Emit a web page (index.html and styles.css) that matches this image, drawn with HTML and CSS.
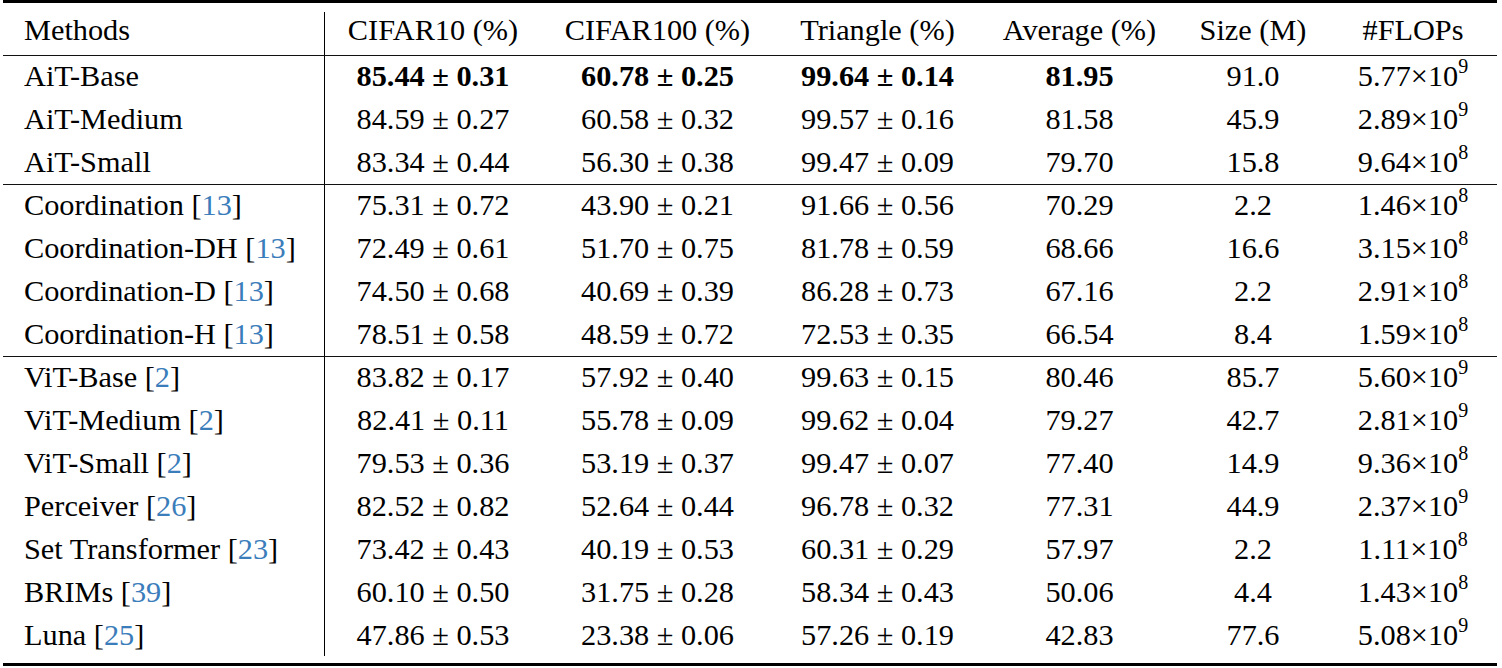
FILE: index.html
```html
<!DOCTYPE html>
<html lang="en">
<head>
<meta charset="utf-8">
<title>Results table</title>
<link rel="stylesheet" href="styles.css">
</head>
<body>
<table class="results">
  <colgroup>
    <col class="c-method">
    <col class="c-cifar10">
    <col class="c-cifar100">
    <col class="c-tri">
    <col class="c-avg">
    <col class="c-size">
    <col class="c-flops">
  </colgroup>
  <thead>
    <tr>
      <th class="method">Methods</th>
      <th>CIFAR10 (%)</th>
      <th>CIFAR100 (%)</th>
      <th>Triangle (%)</th>
      <th>Average (%)</th>
      <th>Size (M)</th>
      <th>#FLOPs</th>
    </tr>
  </thead>
  <tbody class="group first">
    <tr>
      <td class="method">AiT-Base</td>
      <td class="best">85.44 ± 0.31</td>
      <td class="best">60.78 ± 0.25</td>
      <td class="best">99.64 ± 0.14</td>
      <td class="best">81.95</td>
      <td>91.0</td>
      <td>5.77×10<sup class="exp">9</sup></td>
    </tr>
    <tr>
      <td class="method">AiT-Medium</td>
      <td>84.59 ± 0.27</td>
      <td>60.58 ± 0.32</td>
      <td>99.57 ± 0.16</td>
      <td>81.58</td>
      <td>45.9</td>
      <td>2.89×10<sup class="exp">9</sup></td>
    </tr>
    <tr class="tail">
      <td class="method">AiT-Small</td>
      <td>83.34 ± 0.44</td>
      <td>56.30 ± 0.38</td>
      <td>99.47 ± 0.09</td>
      <td>79.70</td>
      <td>15.8</td>
      <td>9.64×10<sup class="exp">8</sup></td>
    </tr>
  </tbody>
  <tbody class="group">
    <tr>
      <td class="method">Coordination [<span class="cite">13</span>]</td>
      <td>75.31 ± 0.72</td>
      <td>43.90 ± 0.21</td>
      <td>91.66 ± 0.56</td>
      <td>70.29</td>
      <td>2.2</td>
      <td>1.46×10<sup class="exp">8</sup></td>
    </tr>
    <tr>
      <td class="method">Coordination-DH [<span class="cite">13</span>]</td>
      <td>72.49 ± 0.61</td>
      <td>51.70 ± 0.75</td>
      <td>81.78 ± 0.59</td>
      <td>68.66</td>
      <td>16.6</td>
      <td>3.15×10<sup class="exp">8</sup></td>
    </tr>
    <tr>
      <td class="method">Coordination-D [<span class="cite">13</span>]</td>
      <td>74.50 ± 0.68</td>
      <td>40.69 ± 0.39</td>
      <td>86.28 ± 0.73</td>
      <td>67.16</td>
      <td>2.2</td>
      <td>2.91×10<sup class="exp">8</sup></td>
    </tr>
    <tr class="tail">
      <td class="method">Coordination-H [<span class="cite">13</span>]</td>
      <td>78.51 ± 0.58</td>
      <td>48.59 ± 0.72</td>
      <td>72.53 ± 0.35</td>
      <td>66.54</td>
      <td>8.4</td>
      <td>1.59×10<sup class="exp">8</sup></td>
    </tr>
  </tbody>
  <tbody class="group last">
    <tr>
      <td class="method">ViT-Base [<span class="cite">2</span>]</td>
      <td>83.82 ± 0.17</td>
      <td>57.92 ± 0.40</td>
      <td>99.63 ± 0.15</td>
      <td>80.46</td>
      <td>85.7</td>
      <td>5.60×10<sup class="exp">9</sup></td>
    </tr>
    <tr>
      <td class="method">ViT-Medium [<span class="cite">2</span>]</td>
      <td>82.41 ± 0.11</td>
      <td>55.78 ± 0.09</td>
      <td>99.62 ± 0.04</td>
      <td>79.27</td>
      <td>42.7</td>
      <td>2.81×10<sup class="exp">9</sup></td>
    </tr>
    <tr>
      <td class="method">ViT-Small [<span class="cite">2</span>]</td>
      <td>79.53 ± 0.36</td>
      <td>53.19 ± 0.37</td>
      <td>99.47 ± 0.07</td>
      <td>77.40</td>
      <td>14.9</td>
      <td>9.36×10<sup class="exp">8</sup></td>
    </tr>
    <tr>
      <td class="method">Perceiver [<span class="cite">26</span>]</td>
      <td>82.52 ± 0.82</td>
      <td>52.64 ± 0.44</td>
      <td>96.78 ± 0.32</td>
      <td>77.31</td>
      <td>44.9</td>
      <td>2.37×10<sup class="exp">9</sup></td>
    </tr>
    <tr>
      <td class="method">Set Transformer [<span class="cite">23</span>]</td>
      <td>73.42 ± 0.43</td>
      <td>40.19 ± 0.53</td>
      <td>60.31 ± 0.29</td>
      <td>57.97</td>
      <td>2.2</td>
      <td>1.11×10<sup class="exp">8</sup></td>
    </tr>
    <tr>
      <td class="method">BRIMs [<span class="cite">39</span>]</td>
      <td>60.10 ± 0.50</td>
      <td>31.75 ± 0.28</td>
      <td>58.34 ± 0.43</td>
      <td>50.06</td>
      <td>4.4</td>
      <td>1.43×10<sup class="exp">8</sup></td>
    </tr>
    <tr class="final">
      <td class="method">Luna [<span class="cite">25</span>]</td>
      <td>47.86 ± 0.53</td>
      <td>23.38 ± 0.06</td>
      <td>57.26 ± 0.19</td>
      <td>42.83</td>
      <td>77.6</td>
      <td>5.08×10<sup class="exp">9</sup></td>
    </tr>
  </tbody>
</table>
</body>
</html>
```

FILE: styles.css
```css
html, body {
  margin: 0;
  padding: 0;
  background: #ffffff;
}

.results {
  margin-left: 3px;
  width: 1494px;
  table-layout: fixed;
  border-collapse: collapse;
  font-family: "Liberation Serif", "Times New Roman", serif;
  font-size: 30.3px;
  color: #000000;
}

.c-method { width: 321px; }
.c-cifar10 { width: 218px; }
.c-cifar100 { width: 231px; }
.c-tri { width: 209px; }
.c-avg { width: 195px; }
.c-size { width: 152px; }
.c-flops { width: 168px; }

.results th,
.results td {
  padding: 0;
  text-align: center;
  vertical-align: top;
  white-space: nowrap;
  font-weight: normal;
}

.results thead tr {
  border-top: 3px solid #000;
  border-bottom: 1px solid #111;
}

.results th {
  height: 50px;
  line-height: 50px;
  padding-top: 2px;
}

.results td {
  height: 43px;
  line-height: 40px;
}

.results .tail td {
  height: 42px;
}

.results .method {
  text-align: left;
  padding-left: 21px;
}

/* vertical separator after the Methods column */
.results th:nth-child(2) {
  background: linear-gradient(#000, #000) left 9px / 1px calc(100% - 9px) no-repeat;
}

.results td:nth-child(2) {
  background: linear-gradient(#000, #000) left top / 1px 100% no-repeat;
}

.results .final td:nth-child(2) {
  background: linear-gradient(#000, #000) left top / 1px calc(100% - 7px) no-repeat;
}

.group {
  border-top: 1px solid #111;
}

.group.first {
  border-top: none;
}

.group.last {
  border-bottom: 3px solid #000;
}

.results .final td {
  height: 48px;
}

.results td.best {
  font-weight: bold;
}

.cite {
  color: #3b7dbb;
}

.exp {
  font-size: 20px;
  line-height: 0;
  vertical-align: 13px;
}
```
